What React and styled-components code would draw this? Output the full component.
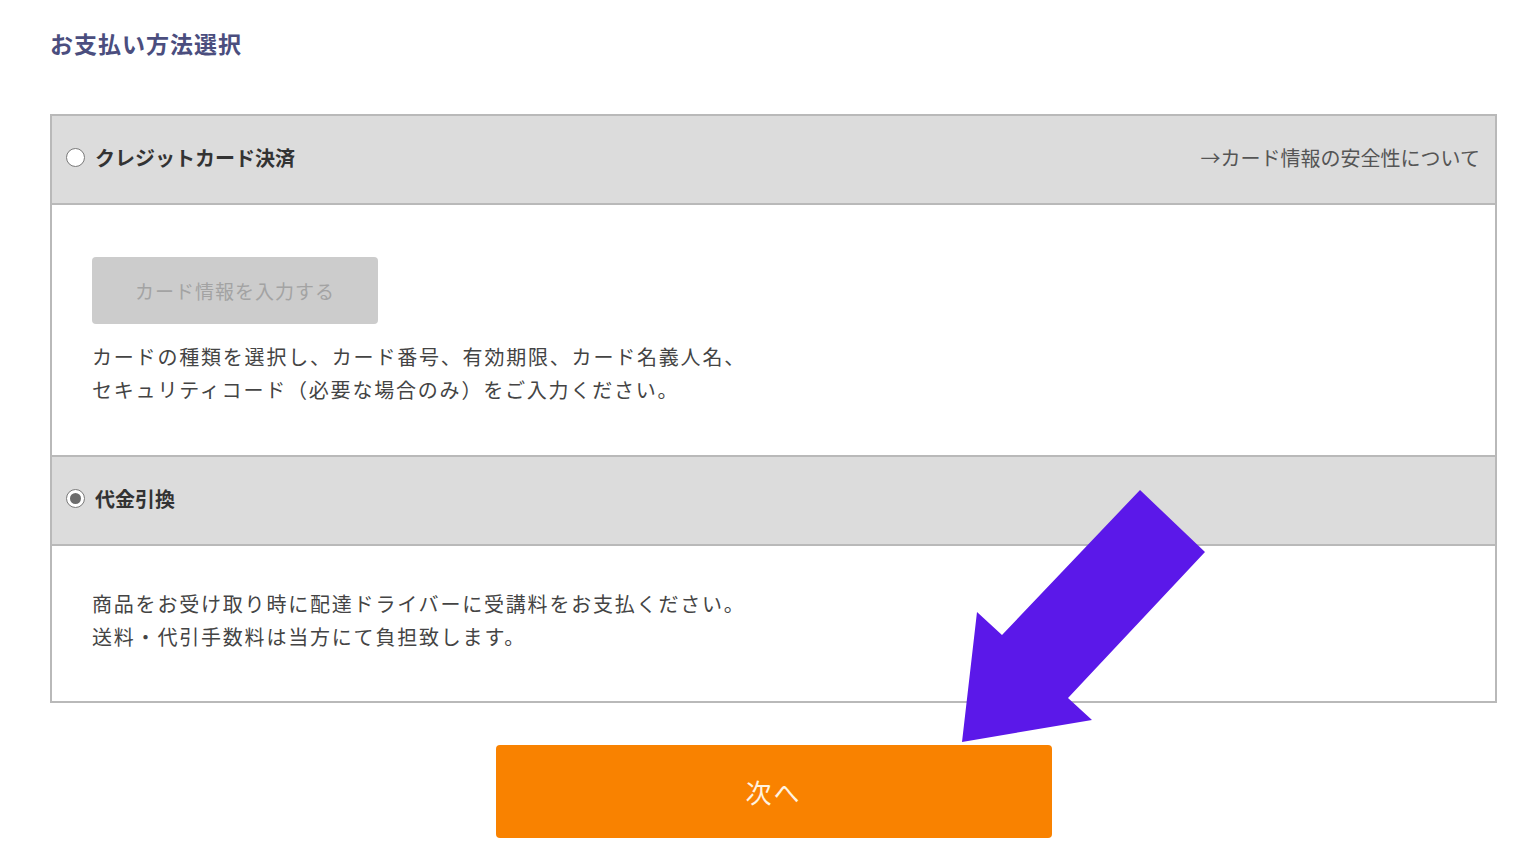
import React from 'react';
import styled, { createGlobalStyle } from 'styled-components';

const GlobalStyle = createGlobalStyle`
  html, body {
    margin: 0;
    padding: 0;
    background: #fff;
  }
  body {
    font-family: 'Noto Sans CJK JP', 'Noto Sans', sans-serif;
    color: #444;
  }
`;

const methods = [
  {
    id: 'card',
    label: 'クレジットカード決済',
    link: '→カード情報の安全性について',
    checked: false,
    button: 'カード情報を入力する',
    lines: [
      'カードの種類を選択し、カード番号、有効期限、カード名義人名、',
      'セキュリティコード（必要な場合のみ）をご入力ください。',
    ],
  },
  {
    id: 'cod',
    label: '代金引換',
    checked: true,
    lines: [
      '商品をお受け取り時に配達ドライバーに受講料をお支払ください。',
      '送料・代引手数料は当方にて負担致します。',
    ],
  },
];

const App = () => (
  <Page>
    <GlobalStyle />
    <Title>お支払い方法選択</Title>

    <Panel>
      {methods.map((m, i) => (
        <Method key={m.id}>
          <MethodHeader>
            <Radio checked={m.checked} />
            <MethodLabel>{m.label}</MethodLabel>
            {m.link && <InfoLink href="#">{m.link}</InfoLink>}
          </MethodHeader>
          <MethodBody last={i === methods.length - 1} hasButton={!!m.button}>
            {m.button && <CardButton disabled>{m.button}</CardButton>}
            <Note>
              {m.lines.map((l) => (
                <span key={l}>
                  {l}
                  <br />
                </span>
              ))}
            </Note>
          </MethodBody>
        </Method>
      ))}
    </Panel>

    <Actions>
      <NextButton>次へ</NextButton>
    </Actions>

    {/* annotation arrow drawn over the page */}
    <Arrow viewBox="960 488 248 256" aria-hidden="true">
      <polygon
        points="1140,490 1205,552 1068,698 1092,720 962,742 977,612 1002,635"
        fill="#5b18e9"
      />
    </Arrow>
  </Page>
);

const Page = styled.div`
  position: relative;
  width: 1536px;
  height: 864px;
  box-sizing: border-box;
  padding: 24px 39px 0 50px;
  overflow: hidden;
`;

const Title = styled.h2`
  margin: 0;
  font-size: 23px;
  line-height: 38px;
  font-weight: 700;
  color: #4b4e7e;
  letter-spacing: 1px;
`;

const Panel = styled.div`
  margin-top: 52px;
  border: 2px solid #b9b9b9;
`;

const Method = styled.div``;

const MethodHeader = styled.div`
  display: flex;
  align-items: center;
  height: 83px;
  padding: 0 15px 4px 14px;
  background: #dcdcdc;
  border-bottom: 2px solid #b9b9b9;
`;

const Radio = styled.span`
  position: relative;
  width: 19px;
  height: 19px;
  box-sizing: border-box;
  border-radius: 50%;
  border: 1.5px solid #7a7a7a;
  background: #fff;
  margin-right: 10px;
  flex-shrink: 0;

  &::after {
    content: '';
    display: ${(p) => (p.checked ? 'block' : 'none')};
    position: absolute;
    inset: 3px;
    border-radius: 50%;
    background: #6c6c6c;
  }
`;

const MethodLabel = styled.span`
  font-size: 20px;
  font-weight: 700;
  color: #333;
`;

const InfoLink = styled.a`
  margin-left: auto;
  font-size: 20px;
  color: #555;
  text-decoration: none;
`;

const MethodBody = styled.div`
  padding: ${(p) => (p.hasButton ? '52px 40px 49px' : '41px 40px 48px')};
  border-bottom: ${(p) => (p.last ? 'none' : '2px solid #b9b9b9')};
  background: #fff;
`;

const CardButton = styled.button`
  display: block;
  width: 286px;
  height: 67px;
  margin-bottom: 16px;
  border: none;
  border-radius: 4px;
  background: #cccccc;
  color: #a3a3a3;
  font-family: inherit;
  font-size: 19px;
  letter-spacing: 1px;
`;

const Note = styled.p`
  margin: 0;
  font-size: 20px;
  line-height: 33px;
  letter-spacing: 1.8px;
  color: #444;
`;

const Actions = styled.div`
  display: flex;
  justify-content: center;
  margin-top: 42px;
`;

const NextButton = styled.button`
  width: 556px;
  height: 93px;
  border: none;
  border-radius: 4px;
  background: #f98200;
  color: #fff3e0;
  font-family: inherit;
  font-size: 26px;
  letter-spacing: 2px;
`;

const Arrow = styled.svg`
  position: absolute;
  left: 960px;
  top: 488px;
  width: 248px;
  height: 256px;
  pointer-events: none;
`;

export default App;
